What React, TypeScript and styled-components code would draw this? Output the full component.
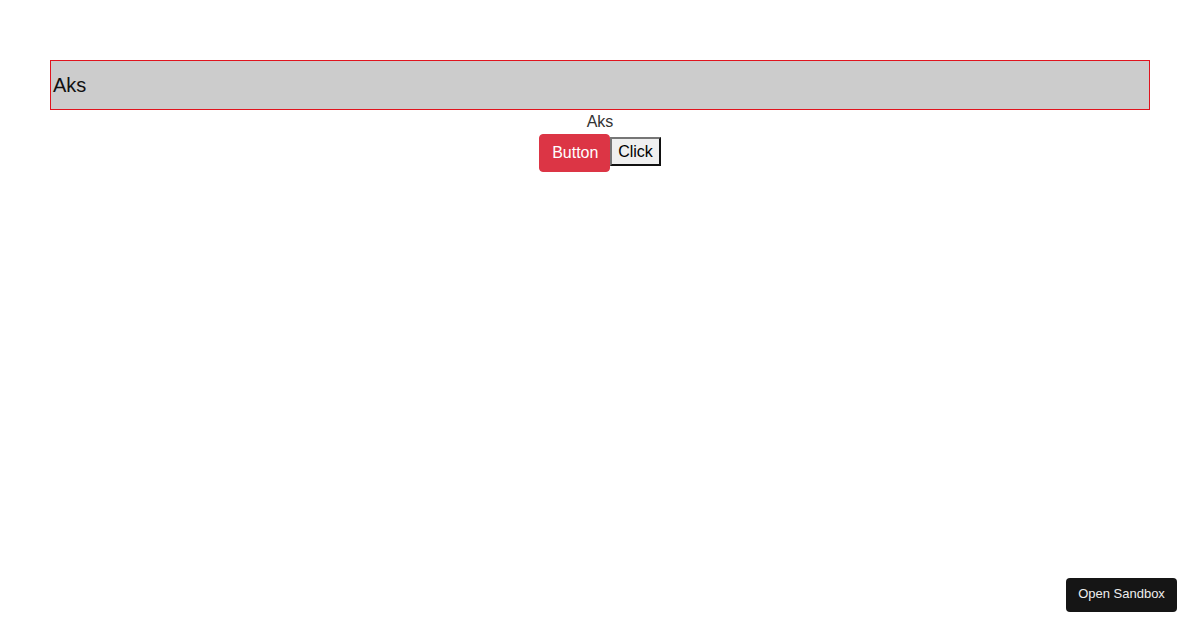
import React from "react";
import styled, { createGlobalStyle } from "styled-components";

const Global = createGlobalStyle`
  html, body { margin: 0; padding: 0; background: #fff; }
  body {
    font-family: "Liberation Sans", Arial, sans-serif;
    font-size: 16px;
    line-height: 1.5;
    color: #212529;
  }
  * { box-sizing: border-box; }
`;

const Page = styled.div`
  padding: 60px 50px 0;
  display: flex;
  flex-direction: column;
  align-items: stretch;
`;

const Header = styled.div`
  height: 50px;
  background: #cccccc;
  border: 1px solid #e0141e;
  display: flex;
  align-items: center;
  padding-left: 2px;
  font-size: 20px;
  color: #111;
`;

const Center = styled.div`
  display: flex;
  flex-direction: column;
  align-items: center;
`;

const Label = styled.div`
  font-size: 16px;
  line-height: 24px;
  color: #333;
`;

const Row = styled.div`
  display: flex;
  align-items: flex-start;
`;

const DangerButton = styled.button`
  font-family: inherit;
  font-size: 16px;
  line-height: 24px;
  padding: 6px 12px;
  height: 38px;
  width: 71px;
  color: #fff;
  background: #dc3545;
  border: 1px solid #dc3545;
  border-radius: 4px;
  cursor: pointer;
`;

const PlainButton = styled.button`
  font-family: inherit;
  font-size: 16px;
  line-height: 23px;
  height: 29px;
  margin-top: 3px;
  padding: 0 6px 1px;
  color: #000;
  background: #efefef;
  border: 2px solid;
  border-color: #767676 #111 #111 #767676;
  border-radius: 0;
`;

const SandboxButton = styled.button`
  position: fixed;
  right: 23px;
  bottom: 18px;
  width: 111px;
  height: 34px;
  padding: 0 0 3px;
  background: #151515;
  color: #eee;
  border: none;
  border-radius: 4px;
  font-family: "Liberation Sans", Arial, sans-serif;
  font-size: 13px;
  cursor: pointer;
`;

export default function App() {
  return (
    <>
      <Global />
      <Page>
        <Header>Aks</Header>
        <Center>
          <Label>Aks</Label>
          <Row>
            <DangerButton>Button</DangerButton>
            <PlainButton>Click</PlainButton>
          </Row>
        </Center>
      </Page>
      <SandboxButton>Open Sandbox</SandboxButton>
    </>
  );
}
